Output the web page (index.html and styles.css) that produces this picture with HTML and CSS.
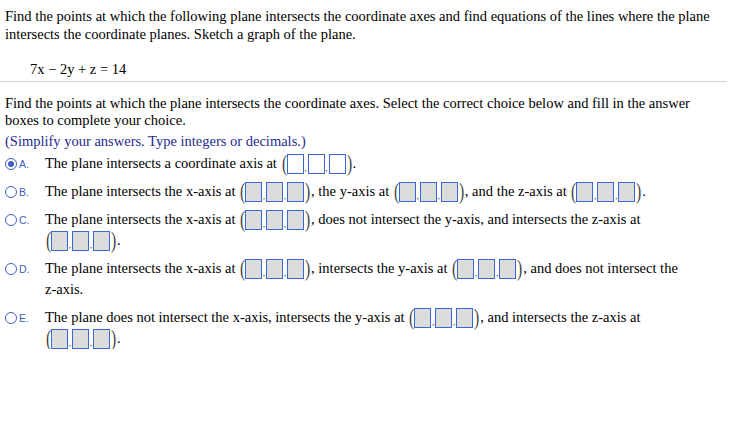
FILE: index.html
```html
<!DOCTYPE html>
<html>
<head>
<meta charset="utf-8">
<link rel="stylesheet" href="styles.css">
</head>
<body>
<div class="page">
  <p class="intro">Find the points at which the following plane intersects the coordinate axes and find equations of the lines where the plane intersects the coordinate planes. Sketch a graph of the plane.</p>
  <p class="equation">7x − 2y + z = 14</p>
  <div class="rule"></div>
  <p class="prompt">Find the points at which the plane intersects the coordinate axes. Select the correct choice below and fill in the answer boxes to complete your choice.</p>
  <p class="hint">(Simplify your answers. Type integers or decimals.)</p>
  <div class="choices">
    <div class="choice">
      <div class="label"><span class="radio selected"></span><span class="letter">A.</span></div>
      <div class="text">The plane intersects a coordinate axis at <span class="nw"><span class="tuple"><span class="paren">(</span><span class="box live"></span><span class="comma">,</span><span class="box live"></span><span class="comma">,</span><span class="box live"></span><span class="paren">)</span></span>.</span></div>
    </div>
    <div class="choice">
      <div class="label"><span class="radio"></span><span class="letter">B.</span></div>
      <div class="text">The plane intersects the x-axis at <span class="nw"><span class="tuple"><span class="paren">(</span><span class="box"></span><span class="comma">,</span><span class="box"></span><span class="comma">,</span><span class="box"></span><span class="paren">)</span></span>,</span> the y-axis at <span class="nw"><span class="tuple"><span class="paren">(</span><span class="box"></span><span class="comma">,</span><span class="box"></span><span class="comma">,</span><span class="box"></span><span class="paren">)</span></span>,</span> and the z-axis at <span class="nw"><span class="tuple"><span class="paren">(</span><span class="box"></span><span class="comma">,</span><span class="box"></span><span class="comma">,</span><span class="box"></span><span class="paren">)</span></span>.</span></div>
    </div>
    <div class="choice">
      <div class="label"><span class="radio"></span><span class="letter">C.</span></div>
      <div class="text">The plane intersects the x-axis at <span class="nw"><span class="tuple"><span class="paren">(</span><span class="box"></span><span class="comma">,</span><span class="box"></span><span class="comma">,</span><span class="box"></span><span class="paren">)</span></span>,</span> does not intersect the y-axis, and intersects the z-axis at <span class="nw"><span class="tuple"><span class="paren">(</span><span class="box"></span><span class="comma">,</span><span class="box"></span><span class="comma">,</span><span class="box"></span><span class="paren">)</span></span>.</span></div>
    </div>
    <div class="choice">
      <div class="label"><span class="radio"></span><span class="letter">D.</span></div>
      <div class="text">The plane intersects the x-axis at <span class="nw"><span class="tuple"><span class="paren">(</span><span class="box"></span><span class="comma">,</span><span class="box"></span><span class="comma">,</span><span class="box"></span><span class="paren">)</span></span>,</span> intersects the y-axis at <span class="nw"><span class="tuple"><span class="paren">(</span><span class="box"></span><span class="comma">,</span><span class="box"></span><span class="comma">,</span><span class="box"></span><span class="paren">)</span></span>,</span> and does not intersect the <span class="nw">z-axis.</span></div>
    </div>
    <div class="choice">
      <div class="label"><span class="radio"></span><span class="letter">E.</span></div>
      <div class="text">The plane does not intersect the <span class="nw">x-axis,</span> intersects the <span class="nw">y-axis</span> at <span class="nw"><span class="tuple"><span class="paren">(</span><span class="box"></span><span class="comma">,</span><span class="box"></span><span class="comma">,</span><span class="box"></span><span class="paren">)</span></span>,</span> and intersects the <span class="nw">z-axis</span> at <span class="nw"><span class="tuple"><span class="paren">(</span><span class="box"></span><span class="comma">,</span><span class="box"></span><span class="comma">,</span><span class="box"></span><span class="paren">)</span></span>.</span></div>
    </div>
  </div>
</div>
</body>
</html>
```
FILE: styles.css
```css
html, body {
  margin: 0;
  padding: 0;
  background: #fff;
}
.page {
  font-family: "Liberation Serif", "Times New Roman", serif;
  font-size: 14.5px;
  color: #000;
  padding: 7px 0 0 5px;
  width: 708px;
}
p { margin: 0; }
.intro {
  line-height: 18px;
}
.equation {
  padding: 17px 0 0 25px;
  line-height: 18px;
}
.rule {
  height: 1px;
  background: #d0d0d0;
  margin: 3px 0 0 -5px;
  width: 727px;
}
.prompt {
  margin-top: 13px;
  line-height: 17px;
}
.hint {
  margin-top: 4px;
  line-height: 17px;
  color: #1f2a8f;
}
.choices {
  display: flex;
  flex-direction: column;
  gap: 7px;
  margin-top: 3px;
}
.choice {
  display: flex;
  align-items: flex-start;
}
.label {
  width: 40px;
  flex: none;
  display: flex;
  align-items: center;
  height: 21px;
}
.radio {
  width: 10px;
  height: 10px;
  border: 1px solid #3d5fc4;
  border-radius: 50%;
  position: relative;
  box-sizing: content-box;
}
.radio.selected::after {
  content: "";
  position: absolute;
  left: 2px; top: 2px;
  width: 6px; height: 6px;
  border-radius: 50%;
  background: #3d5fc4;
}
.letter {
  font-family: "Liberation Sans", Arial, sans-serif;
  font-size: 10.5px;
  color: #3d5fc4;
  margin-left: 2px;
}
.text {
  flex: 1;
  line-height: 21px;
}
.nw { white-space: nowrap; }
.tuple {
  display: inline-flex;
  align-items: flex-end;
  vertical-align: top;
  height: 21px;
  margin-right: 1px;
}
.paren {
  font-size: 24px;
  line-height: 21px;
  color: #444;
  transform: scaleX(0.65);
  display: inline-block;
  width: 6px;
  text-align: center;
}
.box {
  width: 15px;
  height: 18px;
  border: 1px solid #3b69d1;
  background: #dcdcdc;
}
.box.live { background: #fff; }
.comma {
  font-size: 8px;
  line-height: 8px;
  width: 4px;
  text-align: center;
  margin-bottom: 1px;
}
```
